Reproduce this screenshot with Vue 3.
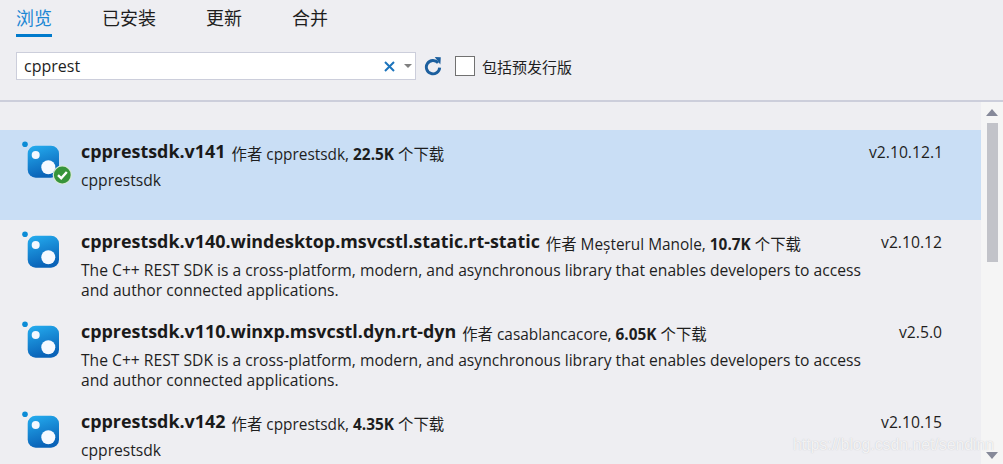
<template>
  <div class="manager">
    <div class="header">
      <div class="tabs">
        <span v-for="(tab, i) in tabs" :key="tab" class="tab" :class="{ active: i === 0 }">{{ tab }}</span>
      </div>
      <div class="search-row">
        <div class="search">
          <span class="query">cpprest</span>
          <svg class="clear" width="11" height="11" viewBox="0 0 11 11">
            <path d="M1 1L10 10M10 1L1 10" stroke="#1c74bc" stroke-width="2" fill="none" />
          </svg>
          <span class="drop"></span>
        </div>
        <svg class="refresh" width="18" height="20" viewBox="0 0 16 18">
          <path d="M12.6 6.2A6 6 0 1 0 14 10.5" stroke="#1c5f9e" stroke-width="2.6" fill="none" />
          <path d="M9.6 1L15 1.2L14.6 7.6Z" fill="#1c5f9e" />
        </svg>
        <span class="check"></span>
        <span class="check-label">包括预发行版</span>
      </div>
    </div>
    <div class="body">
      <div class="list">
        <div v-for="pkg in packages" :key="pkg.name" class="row" :class="{ selected: pkg.selected }">
          <div class="icon">
            <svg width="52" height="46" viewBox="0 0 52 46">
              <defs>
                <linearGradient :id="'g' + pkg.version" x1="0" y1="0" x2="0.3" y2="1">
                  <stop offset="0" stop-color="#25aef0" />
                  <stop offset="1" stop-color="#0a63b8" />
                </linearGradient>
              </defs>
              <circle cx="4" cy="3.3" r="2.8" fill="#0b8bd6" />
              <rect x="6.7" y="4.7" width="31.3" height="32" rx="8" :fill="'url(#g' + pkg.version + ')'" />
              <circle cx="14.7" cy="14" r="4" fill="#f4f8ff" />
              <circle cx="27.3" cy="26.3" r="7" fill="#f6f9ff" />
              <template v-if="pkg.selected">
                <circle cx="41.3" cy="34" r="9.7" fill="#d6e8d8" />
                <circle cx="41.3" cy="34" r="8.4" fill="#37943a" />
                <path d="M37 34.2L40.2 37.2L45.8 31" stroke="#fff" stroke-width="2.4" fill="none" />
              </template>
            </svg>
          </div>
          <div class="info">
            <div class="title">
              <span class="name">{{ pkg.name }}</span>
              <span class="meta">作者 {{ pkg.author }}, <b>{{ pkg.count }}</b> 个下载</span>
            </div>
            <div class="desc">{{ pkg.desc }}</div>
          </div>
          <div class="version">{{ pkg.version }}</div>
        </div>
      </div>
      <div class="scrollbar">
        <span class="arrow up"></span>
        <span class="thumb"></span>
        <span class="arrow down"></span>
      </div>
      <span class="watermark">https://blog.csdn.net/sendinn</span>
    </div>
  </div>
</template>

<script setup>
const tabs = ['浏览', '已安装', '更新', '合并']

const longDesc = 'The C++ REST SDK is a cross-platform, modern, and asynchronous library that enables developers to access and author connected applications.'

const packages = [
  { name: 'cpprestsdk.v141', author: 'cpprestsdk', count: '22.5K', desc: 'cpprestsdk', version: 'v2.10.12.1', selected: true },
  { name: 'cpprestsdk.v140.windesktop.msvcstl.static.rt-static', author: 'Meșterul Manole', count: '10.7K', desc: longDesc, version: 'v2.10.12' },
  { name: 'cpprestsdk.v110.winxp.msvcstl.dyn.rt-dyn', author: 'casablancacore', count: '6.05K', desc: longDesc, version: 'v2.5.0' },
  { name: 'cpprestsdk.v142', author: 'cpprestsdk', count: '4.35K', desc: 'cpprestsdk', version: 'v2.10.15' }
]
</script>

<style>
html, body {
  margin: 0;
  overflow: hidden;
  background: #eeeef2;
}
</style>

<style scoped>
.manager {
  width: 1003px;
  height: 464px;
  overflow: hidden;
  background: #eeeef2;
  color: #1e1e1e;
  font-family: "Open Sans", "Noto Sans CJK SC", sans-serif;
  font-size: 14px;
}

.header {
  height: 102px;
  box-sizing: border-box;
  padding: 7px 0 0 16px;
  border-bottom: 2px solid #cccedb;
}

.tabs {
  display: flex;
  gap: 50px;
  height: 30px;
}

.tab {
  font-size: 18px;
  line-height: 21px;
  height: 30px;
  box-sizing: border-box;
  font-family: "Noto Sans CJK SC", sans-serif;
}

.tab.active {
  color: #1c87d4;
  border-bottom: 3px solid #007acc;
}

.search-row {
  display: flex;
  align-items: center;
  margin-top: 15px;
}

.search {
  width: 400px;
  height: 28px;
  box-sizing: border-box;
  background: #fff;
  border: 1px solid #cccedb;
  display: flex;
  align-items: center;
  padding-left: 7px;
  font-size: 16px;
}

.query {
  flex: 1;
}

.clear {
  margin-right: 9px;
}

.drop {
  width: 0;
  height: 0;
  border-left: 4px solid transparent;
  border-right: 4px solid transparent;
  border-top: 4px solid #808080;
  margin-right: 3px;
}

.refresh {
  margin-left: 8px;
}

.check {
  width: 18px;
  height: 18px;
  background: #fff;
  border: 1px solid #717171;
  margin-left: 13px;
}

.check-label {
  margin-left: 7px;
  font-size: 15px;
  font-family: "Noto Sans CJK SC", sans-serif;
}

.body {
  position: relative;
  display: flex;
  height: 362px;
}

.list {
  width: 981px;
  padding-top: 28px;
}

.row {
  height: 90px;
  display: flex;
  box-sizing: border-box;
  padding-top: 11px;
}

.row.selected {
  background: #c9def5;
}

.icon {
  width: 81px;
  padding-left: 21px;
  box-sizing: border-box;
  flex-shrink: 0;
  line-height: 0;
}

.info {
  width: 788px;
  flex-shrink: 0;
}

.title {
  display: flex;
  align-items: flex-start;
  height: 24px;
}

.name {
  font-size: 17.9px;
  font-weight: 700;
  line-height: 21px;
  color: #1a1a1a;
}

.meta {
  margin-left: 6px;
  padding-top: 2px;
  font-size: 15.4px;
  line-height: 24px;
}

.meta b {
  font-weight: 700;
}

.desc {
  margin-top: 5px;
  font-size: 15.65px;
  line-height: 20px;
}

.version {
  width: 73px;
  text-align: right;
  line-height: 22px;
  font-size: 15.7px;
  flex-shrink: 0;
}

.scrollbar {
  width: 22px;
  background: #f5f5f5;
  display: flex;
  flex-direction: column;
  align-items: center;
}

.arrow {
  width: 0;
  height: 0;
  border-left: 6px solid transparent;
  border-right: 6px solid transparent;
}

.arrow.up {
  margin-top: 7px;
  border-bottom: 7px solid #868999;
}

.thumb {
  width: 11px;
  height: 139px;
  margin-top: 7px;
  background: #c2c3c9;
}

.arrow.down {
  margin-top: auto;
  margin-bottom: 5px;
  border-top: 7px solid #868999;
}

.watermark {
  position: absolute;
  left: 793px;
  top: 334px;
  font-family: "Liberation Sans", sans-serif;
  font-size: 15.8px;
  color: rgba(255, 255, 255, 0.8);
  text-shadow: 0 0 1px rgba(170, 170, 175, 0.7);
  white-space: nowrap;
}
</style>
